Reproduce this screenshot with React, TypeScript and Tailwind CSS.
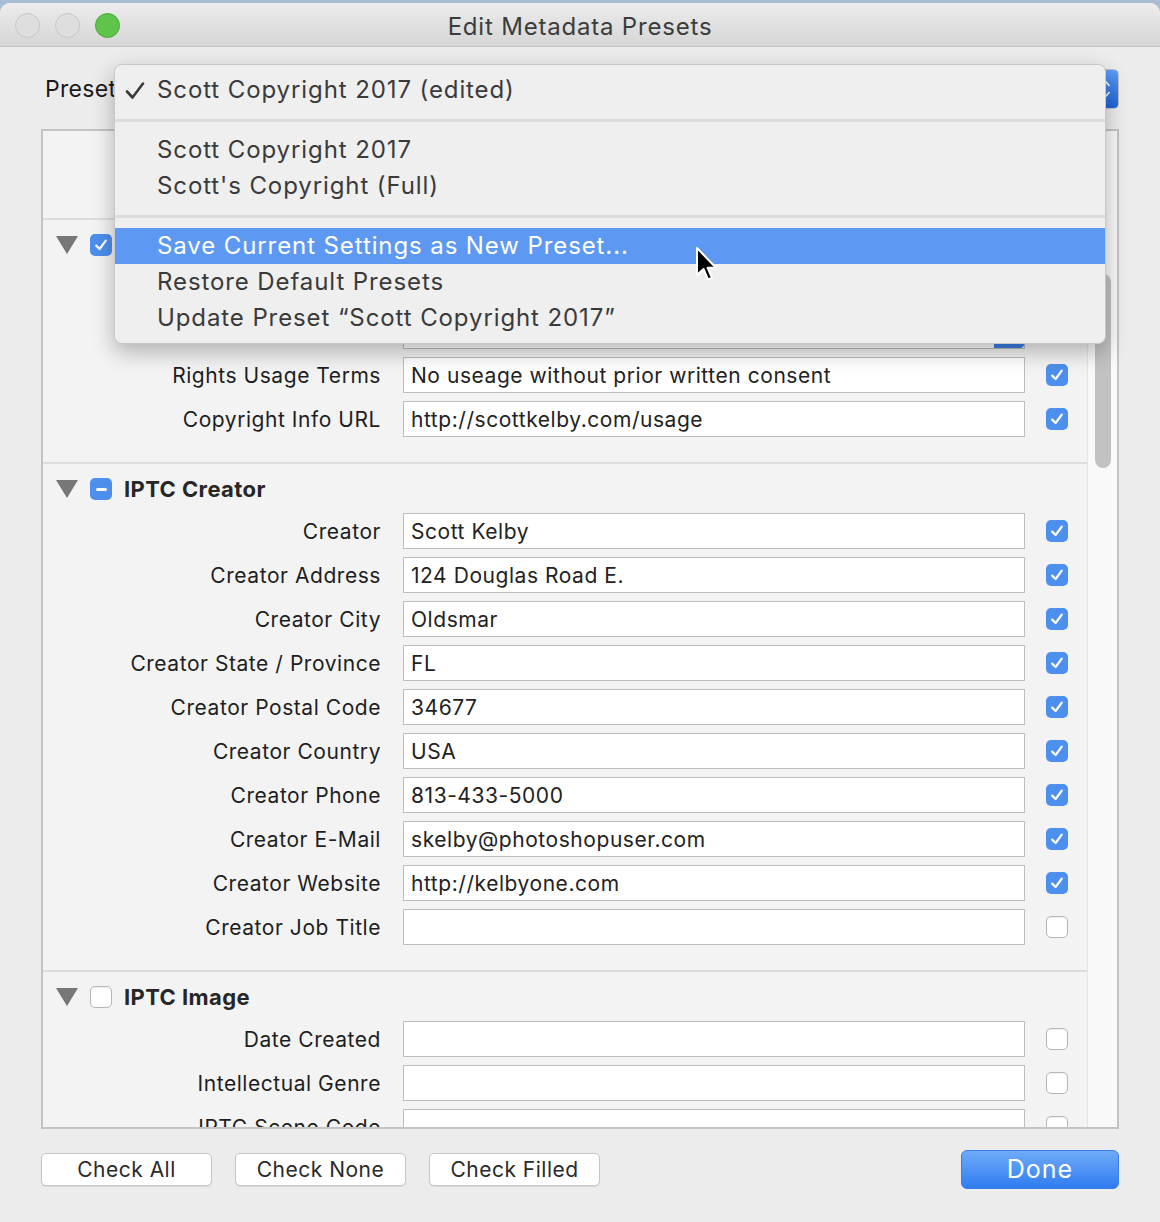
import React from "react";

type Row = { label: string; value: string; checked: boolean; popup?: boolean };

const copyrightRows: Row[] = [
  { label: "Copyright", value: "© 2017 Scott Kelby", checked: true },
  { label: "Copyright Status", value: "Copyrighted", checked: true, popup: true },
  { label: "Rights Usage Terms", value: "No useage without prior written consent", checked: true },
  { label: "Copyright Info URL", value: "http://scottkelby.com/usage", checked: true },
];

const creatorRows: Row[] = [
  { label: "Creator", value: "Scott Kelby", checked: true },
  { label: "Creator Address", value: "124 Douglas Road E.", checked: true },
  { label: "Creator City", value: "Oldsmar", checked: true },
  { label: "Creator State / Province", value: "FL", checked: true },
  { label: "Creator Postal Code", value: "34677", checked: true },
  { label: "Creator Country", value: "USA", checked: true },
  { label: "Creator Phone", value: "813-433-5000", checked: true },
  { label: "Creator E-Mail", value: "skelby@photoshopuser.com", checked: true },
  { label: "Creator Website", value: "http://kelbyone.com", checked: true },
  { label: "Creator Job Title", value: "", checked: false },
];

const imageRows: Row[] = [
  { label: "Date Created", value: "", checked: false },
  { label: "Intellectual Genre", value: "", checked: false },
  { label: "IPTC Scene Code", value: "", checked: false },
];

function Check({ state }: { state: "on" | "off" | "mixed" }) {
  if (state === "off") {
    return (
      <div className="h-[22px] w-[22px] shrink-0 rounded-[5px] border border-[#b5b5b5] bg-white shadow-[inset_0_1px_1px_rgba(0,0,0,0.06)]" />
    );
  }
  return (
    <div className="flex h-[22px] w-[22px] shrink-0 items-center justify-center rounded-[5px] bg-[#4c8fec]">
      {state === "on" ? (
        <svg width="16" height="16" viewBox="0 0 16 16">
          <path d="M3.2 8.6 L6.6 12 L12.8 3.6" fill="none" stroke="white" strokeWidth="2.2" strokeLinecap="round" strokeLinejoin="round" />
        </svg>
      ) : (
        <div className="h-[3px] w-[11px] rounded-full bg-white" />
      )}
    </div>
  );
}

function Triangle() {
  return (
    <svg width="22" height="18" viewBox="0 0 22 18" className="shrink-0">
      <path d="M0 0 H22 L11 18 Z" fill="#777777" />
    </svg>
  );
}

function FieldRow({ row }: { row: Row }) {
  return (
    <div className="flex h-[44px] items-center">
      <div className="w-[338px] shrink-0 whitespace-nowrap pt-[2px] text-right text-[21px] text-[#1e1e1e]">{row.label}</div>
      <div className="ml-[22px] flex h-[36px] w-[622px] shrink-0 items-center overflow-hidden border border-[#bdbdbd] bg-white pt-[1px] text-[21px] text-[#222]">
        <span className="flex-1 pl-[7px] whitespace-nowrap">{row.value}</span>
        {row.popup && <div className="h-full w-[30px] rounded-r-[4px] bg-[#3b7ee8]" />}
      </div>
      <div className="ml-[21px]">
        <Check state={row.checked ? "on" : "off"} />
      </div>
    </div>
  );
}

function Section({ title, state, rows }: { title: string; state: "on" | "off" | "mixed"; rows: Row[] }) {
  return (
    <div className="border-t-2 border-[#dcdcdc] pt-[5px] pb-[21px]">
      <div className="flex h-[40px] items-center pl-[13px]">
        <Triangle />
        <div className="ml-[12px]">
          <Check state={state} />
        </div>
        <span className="ml-[12px] pt-[1px] text-[22px] font-bold tracking-[0.4px] text-[#262626]">{title}</span>
      </div>
      {rows.map((r) => (
        <FieldRow key={r.label} row={r} />
      ))}
    </div>
  );
}

function MenuItem({ text, active, checked }: { text: string; active?: boolean; checked?: boolean }) {
  return (
    <div
      className={
        active
          ? "relative flex h-[36px] items-center bg-[#5d99f2] pl-[42px] text-white"
          : "relative flex h-[36px] items-center pl-[42px] text-[#3a3a3a]"
      }
    >
      {checked && (
        <svg className="absolute left-[10px] top-[10px]" width="20" height="18" viewBox="0 0 20 18">
          <path d="M2 9.5 L7.5 15.5 L18 1.5" fill="none" stroke="#3a3a3a" strokeWidth="2.6" strokeLinecap="round" strokeLinejoin="round" />
        </svg>
      )}
      <span className="whitespace-nowrap">{text}</span>
    </div>
  );
}

function Separator() {
  return (
    <div className="flex h-[24px] items-center">
      <div className="h-[3px] w-full bg-[#dddddd]" />
    </div>
  );
}

function PushButton({ children }: { children: React.ReactNode }) {
  return (
    <button className="h-[33px] w-[171px] rounded-[5px] border border-[#c6c6c6] bg-white text-[21px] tracking-[0.5px] text-[#2a2a2a] shadow-[0_1px_1px_rgba(0,0,0,0.08)]">
      {children}
    </button>
  );
}

export default function App() {
  return (
    <div
      className="relative h-[1222px] w-[1160px] overflow-hidden bg-[#a8bdd1] tracking-[0.55px]"
      style={{ fontFamily: 'Inter, "Liberation Sans", Arial, sans-serif' }}
    >
      <div className="mt-[3px] flex h-[1219px] flex-col overflow-hidden rounded-t-[10px] bg-[#ececec]">
        {/* title bar */}
        <div className="relative flex h-[44px] shrink-0 items-center justify-center border-b border-[#c2c2c2] bg-gradient-to-b from-[#ececec] to-[#d6d6d6] pt-[4px]">
          <div className="absolute left-[15px] top-[10px] flex gap-[15px]">
            <div className="h-[25px] w-[25px] rounded-full border border-[#c6c6c6] bg-[#dedede]" />
            <div className="h-[25px] w-[25px] rounded-full border border-[#c6c6c6] bg-[#dedede]" />
            <div className="h-[25px] w-[25px] rounded-full border border-[#4aa93b] bg-[#5ec44a]" />
          </div>
          <span className="text-[24px] tracking-[0.8px] text-[#3c3c3c]">Edit Metadata Presets</span>
        </div>

        {/* preset row */}
        <div className="flex h-[82px] shrink-0 items-center pl-[45px] pr-[41px] pt-[2px]">
          <span className="text-[23px] tracking-[0.3px] text-[#1a1a1a]">Preset:</span>
          <div className="ml-[6px] flex h-[40px] flex-1 items-center overflow-hidden rounded-[5px] border border-[#c4c4c4] bg-white">
            <span className="flex-1 pl-[10px] text-[22px] text-[#222]">Scott Copyright 2017 (edited)</span>
            <div className="flex h-full w-[24px] items-center justify-center bg-gradient-to-b from-[#5b9cf6] to-[#1f62d8]">
              <svg width="10" height="22" viewBox="0 0 10 22">
                <path d="M1.5 8 L5 4 L8.5 8 M1.5 14 L5 18 L8.5 14" fill="none" stroke="white" strokeWidth="1.6" />
              </svg>
            </div>
          </div>
        </div>

        {/* fields panel */}
        <div className="mx-[41px] flex h-[1000px] shrink-0 overflow-hidden border-2 border-[#c3c3c3] bg-[#f3f3f3]">
          <div className="flex-1 overflow-hidden">
            <div className="h-[87px]" />
            <Section title="IPTC Copyright" state="on" rows={copyrightRows} />
            <Section title="IPTC Creator" state="mixed" rows={creatorRows} />
            <Section title="IPTC Image" state="off" rows={imageRows} />
          </div>
          <div className="w-[30px] shrink-0 border-l border-[#e4e4e4] bg-[#f9f9f9] pl-[7px] pt-[143px]">
            <div className="h-[194px] w-[16px] rounded-full bg-[#c2c2c2]" />
          </div>
        </div>

        {/* bottom buttons */}
        <div className="mt-[21px] flex items-center px-[41px]">
          <div className="flex gap-[23px]">
            <PushButton>Check All</PushButton>
            <PushButton>Check None</PushButton>
            <PushButton>Check Filled</PushButton>
          </div>
          <button className="ml-auto h-[39px] w-[158px] rounded-[6px] border border-[#3a7ce6] bg-gradient-to-b from-[#6eaaf8] to-[#2e7cf0] text-[25px] tracking-[1px] text-white">
            Done
          </button>
        </div>
      </div>

      {/* popup menu */}
      <div className="absolute left-[114px] top-[64px] w-[992px] rounded-[8px] border border-[#c9c9c9] bg-[#efefef] pt-[7px] pb-[7px] text-[24px] tracking-[0.9px] shadow-[0_8px_22px_rgba(0,0,0,0.28)]">
        <MenuItem text="Scott Copyright 2017 (edited)" checked />
        <Separator />
        <MenuItem text="Scott Copyright 2017" />
        <MenuItem text="Scott's Copyright (Full)" />
        <Separator />
        <MenuItem text="Save Current Settings as New Preset..." active />
        <MenuItem text="Restore Default Presets" />
        <MenuItem text="Update Preset “Scott Copyright 2017”" />
      </div>

      {/* mouse cursor */}
      <svg className="absolute left-[695px] top-[246px]" width="26" height="38" viewBox="0 0 26 38">
        <path d="M2 2 L2 29 L8.5 23 L13 33.5 L17 31.8 L12.6 21.8 L21 21.8 Z" fill="black" stroke="white" strokeWidth="2" strokeLinejoin="round" />
      </svg>
    </div>
  );
}
